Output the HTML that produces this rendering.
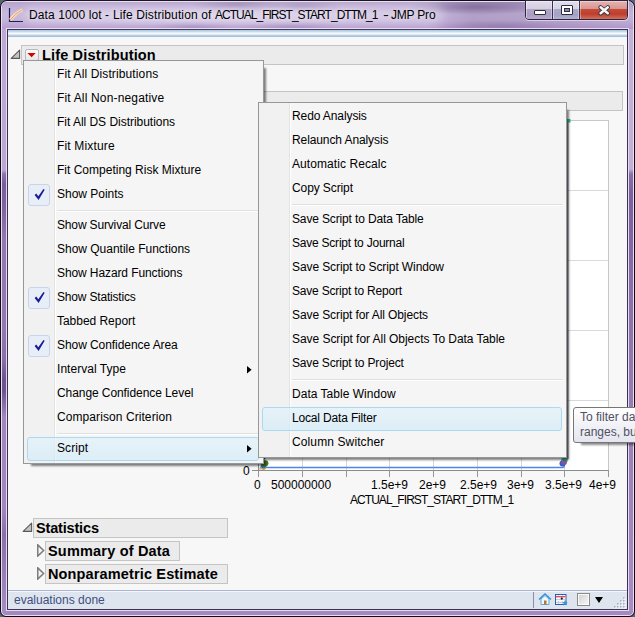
<!DOCTYPE html>
<html><head><meta charset="utf-8">
<style>
*{margin:0;padding:0;box-sizing:border-box}
html,body{width:635px;height:617px;overflow:hidden;background:#56666c}
body{position:relative;font-family:"Liberation Sans",sans-serif;font-size:12px;color:#000}
.abs{position:absolute}
#frame{position:absolute;left:0;top:0;width:635px;height:617px;border-radius:7px 7px 6px 6px;
 background:#a38abe;border:1px solid #120a1a;overflow:hidden}
#frame:before{content:"";position:absolute;left:0;top:0;right:0;bottom:0;border:1px solid rgba(240,232,248,.9);border-radius:6px 6px 5px 5px}
#tbar{position:absolute;left:1px;top:1px;width:631px;height:28px;border-radius:6px 6px 0 0;
 background:
  radial-gradient(ellipse 220px 10px at 220px 14px, rgba(230,222,240,.6), rgba(230,222,240,0)),
  radial-gradient(ellipse 45px 7px at 235px 3px, rgba(110,90,135,.4), rgba(110,90,135,0)),
  radial-gradient(ellipse 40px 6px at 300px 4px, rgba(110,90,135,.3), rgba(110,90,135,0)),
  radial-gradient(ellipse 70px 8px at 475px 5px, rgba(100,82,125,.55), rgba(100,82,125,0)),
  radial-gradient(ellipse 40px 6px at 190px 25px, rgba(120,95,150,.3), rgba(120,95,150,0)),
  radial-gradient(ellipse 50px 6px at 290px 25px, rgba(120,95,150,.3), rgba(120,95,150,0)),
  radial-gradient(ellipse 60px 6px at 500px 24px, rgba(110,85,140,.3), rgba(110,85,140,0)),
  linear-gradient(90deg,rgba(80,55,110,0) 0px,rgba(80,55,110,0) 425px,rgba(80,55,110,.18) 470px,rgba(80,55,110,.14) 560px,rgba(80,55,110,.04) 633px),
  linear-gradient(#b6a4cc 0px,#c0aed6 5px,#c8b8dc 11px,#c6b5da 18px,#bba4d3 24px,#b49acd 28px)}
#client{position:absolute;left:7px;top:29px;width:621px;height:581px;border:1px solid #3e3050;background:#f7f7f7;box-shadow:0 0 0 1px rgba(236,228,246,.9)}
#cband{position:absolute;left:8px;top:30px;width:619px;height:7px;background:linear-gradient(#abc8df 0px,#c4d9ea 1.5px,#eef4fa 3px,#f6f9fd 3.5px,#dbe7f2 4.5px,#a9c2dc 6px,#a9c2dc 7px)}
.title{position:absolute;left:29px;top:8px;font-size:12px;line-height:14px;color:#000;letter-spacing:-0.28px;white-space:nowrap;text-shadow:0 0 5px rgba(255,255,255,.55)}
.hbox{position:absolute;background:#ebebeb;border:1px solid #c4c4c4}
.htxt{position:absolute;font-weight:bold;font-size:14.5px;line-height:17px;white-space:nowrap}
.menu{position:absolute;background:#f5f5f5;border:1px solid #979797;box-shadow:5px 5px 2px -3px rgba(0,0,0,.5)}
.gut{position:absolute;left:0;top:0;bottom:0;width:31px;background:#f1f1f1;border-right:1px solid #e2e3e3}
.gut:after{content:"";position:absolute;right:-2px;top:0;bottom:0;width:1px;background:#fff}
.mi{position:absolute;white-space:nowrap;font-size:12px;line-height:14px;letter-spacing:-0.1px}
.sep{position:absolute;height:2px;border-top:1px solid #e0e0e0;border-bottom:1px solid #fff}
.hl{position:absolute;border:1px solid #aad9f2;border-radius:3px;background:linear-gradient(rgba(226,242,250,.75),rgba(214,236,247,.75))}
.chk{position:absolute;width:22px;height:22px;border:1px solid #cad3ec;border-radius:3px;background:#e8eef8}
.arr{position:absolute;width:0;height:0;border-left:4px solid #000;border-top:3.5px solid transparent;border-bottom:3.5px solid transparent}
.ax{position:absolute;font-size:12px;white-space:nowrap;line-height:14px}
.cbtn{position:absolute;top:0;height:18px}
</style></head><body>
<div id="frame"><div id="tbar"></div>
<div class="abs" style="left:1px;top:28px;width:5px;height:583px;background:linear-gradient(#bcaad4 0px,#baa8d3 141px,#8e74ae 145px,#7a5e9c 155px,#7e64a0 178px,#9278b0 210px,#9278b0 300px,#8a70aa 330px,#6c5490 350px,#6c5490 362px,#a088bc 388px,#a088bc 480px,#8a70a8 505px,#a58cc2 583px)"></div>
<div class="abs" style="left:628px;top:28px;width:4px;height:583px;background:linear-gradient(#c2b2d8 0px,#c0b0d7 140px,#8a70a8 145px,#7a60a0 165px,#8e76ac 300px,#9a82b8 420px,#a68dc3 583px)"></div>
</div>
<div id="client"></div>
<div id="cband"></div>

<!-- title icon -->
<svg class="abs" style="left:8px;top:7px" width="16" height="16" viewBox="0 0 16 16">
 <path d="M1.5 1 V14.5 H15" stroke="#1b2350" stroke-width="1.2" fill="none"/>
 <path d="M2.2 13 Q7 6.5 14.5 2.6" stroke="#fbe1ad" stroke-width="3" fill="none"/>
 <path d="M2.2 13 Q7 6.5 14.5 2.6" stroke="#e7948e" stroke-width="1" fill="none"/>
</svg>
<div class="abs" style="left:24px;top:5px;width:420px;height:20px;border-radius:10px;background:rgba(236,228,244,.35);filter:blur(4px)"></div>
<div class="title" style="left:29px;letter-spacing:0.1px">Data 1000 lot -</div>
<div class="title" style="left:113px;letter-spacing:0.12px">Life Distribution of</div>
<div class="title" style="left:215px;letter-spacing:-0.98px">ACTUAL_FIRST_START_DTTM_1</div>
<div class="title" style="left:383px;letter-spacing:0;transform:scaleX(1.5);transform-origin:0 0">-</div>
<div class="title" style="left:391px;letter-spacing:-0.2px">JMP Pro</div>

<!-- caption buttons -->
<div class="abs" style="left:525px;top:0;width:103px;height:20px;border:1px solid #2e2640;border-radius:0 0 4px 4px;overflow:hidden;box-shadow:0 1px 0 rgba(240,235,250,.6),1px 0 0 rgba(240,235,250,.7)">
 <div class="cbtn" style="left:0;width:27px;background:linear-gradient(#e2dcea 0px,#d6cde2 8px,#b2a6c8 8.5px,#a99dc2 14px,#b8acd0 18px);border-right:1px solid #3a3050;box-shadow:inset 1px 1px 0 rgba(255,255,255,.45),inset -1px 0 0 rgba(255,255,255,.35)"></div>
 <div class="cbtn" style="left:27px;width:27px;background:linear-gradient(#e0dfec 0px,#d4d2e4 8px,#aaa8c8 8.5px,#a3a2c4 14px,#b4b2d2 18px);border-right:1px solid #3a3050;box-shadow:inset 1px 1px 0 rgba(255,255,255,.45),inset -1px 0 0 rgba(255,255,255,.35)"></div>
 <div class="cbtn" style="left:54px;width:48px;background:linear-gradient(#e6b4b0 0px,#d99590 8px,#c44a38 8.5px,#be3e2c 13px,#d2705e 18px);box-shadow:inset 1px 1px 0 rgba(255,255,255,.35)"></div>
 <div class="abs" style="left:8px;top:9px;width:12px;height:5px;background:#fff;border:1px solid #2c2c3c;border-radius:1px"></div>
 <div class="abs" style="left:35px;top:4px;width:12px;height:10px;border:1px solid #2c2c3c;background:#fff;border-radius:1px"></div>
 <div class="abs" style="left:38px;top:7px;width:6px;height:4px;border:1px solid #2c2c3c;background:#8e88b8"></div>
 <svg class="abs" style="left:72px;top:4px" width="13" height="12" viewBox="0 0 13 12">
  <path d="M2.6 2.3 L9.8 8.3 M9.8 2.3 L2.6 8.3" stroke="#3a3440" stroke-width="4.3" stroke-linecap="round"/>
  <path d="M2.6 2.3 L9.8 8.3 M9.8 2.3 L2.6 8.3" stroke="#f6f6f6" stroke-width="2.5" stroke-linecap="round"/>
 </svg>
</div>

<!-- Life Distribution header -->
<div class="hbox" style="left:21px;top:45px;width:603px;height:20px"></div>
<svg class="abs" style="left:10px;top:49px" width="11" height="11"><path d="M9.6 1.2 V9.4 H1.2 Z" fill="#c4c4c4" stroke="#5a5a5a" stroke-width="1.1" stroke-linejoin="round"/></svg>
<div class="abs" style="left:25px;top:49px;width:14px;height:12px;border:1px solid #b9b9b9;border-radius:2px;background:linear-gradient(#fdfdfd,#e6e6e6)"></div>
<svg class="abs" style="left:27px;top:52px" width="10" height="7"><path d="M0.4 1 H8.7 L4.6 5.3Z" fill="#d80000"/></svg>
<div class="htxt" style="left:42px;top:47px;letter-spacing:0.16px">Life Distribution</div>

<!-- second bar -->
<div class="hbox" style="left:40px;top:91px;width:583px;height:20px"></div>

<!-- plot -->
<div class="abs" style="left:258px;top:120px;width:351px;height:351px;background:#fff;border:1px solid #c8c8c8;border-left-color:#8c8c8c;border-bottom-color:#8c8c8c"></div>
<div class="abs" style="left:302px;top:121px;width:1px;height:349px;background:#d9d9d9"></div>
<div class="abs" style="left:346px;top:121px;width:1px;height:349px;background:#d9d9d9"></div>
<div class="abs" style="left:389px;top:121px;width:1px;height:349px;background:#d9d9d9"></div>
<div class="abs" style="left:433px;top:121px;width:1px;height:349px;background:#d9d9d9"></div>
<div class="abs" style="left:477px;top:121px;width:1px;height:349px;background:#d9d9d9"></div>
<div class="abs" style="left:521px;top:121px;width:1px;height:349px;background:#d9d9d9"></div>
<div class="abs" style="left:564px;top:121px;width:1px;height:349px;background:#d9d9d9"></div>
<div class="abs" style="left:259px;top:190px;width:349px;height:1px;background:#d9d9d9"></div>
<div class="abs" style="left:259px;top:260px;width:349px;height:1px;background:#d9d9d9"></div>
<div class="abs" style="left:259px;top:330px;width:349px;height:1px;background:#d9d9d9"></div>
<div class="abs" style="left:259px;top:400px;width:349px;height:1px;background:#d9d9d9"></div>
<div class="abs" style="left:258px;top:470px;width:1px;height:7px;background:#959595"></div>
<div class="abs" style="left:302px;top:470px;width:1px;height:7px;background:#959595"></div>
<div class="abs" style="left:346px;top:470px;width:1px;height:7px;background:#959595"></div>
<div class="abs" style="left:389px;top:470px;width:1px;height:7px;background:#959595"></div>
<div class="abs" style="left:433px;top:470px;width:1px;height:7px;background:#959595"></div>
<div class="abs" style="left:477px;top:470px;width:1px;height:7px;background:#959595"></div>
<div class="abs" style="left:521px;top:470px;width:1px;height:7px;background:#959595"></div>
<div class="abs" style="left:564px;top:470px;width:1px;height:7px;background:#959595"></div>
<div class="abs" style="left:608px;top:470px;width:1px;height:7px;background:#959595"></div>
<div class="abs" style="left:252px;top:120px;width:7px;height:1px;background:#8c8c8c"></div>
<div class="abs" style="left:252px;top:190px;width:7px;height:1px;background:#8c8c8c"></div>
<div class="abs" style="left:252px;top:260px;width:7px;height:1px;background:#8c8c8c"></div>
<div class="abs" style="left:252px;top:330px;width:7px;height:1px;background:#8c8c8c"></div>
<div class="abs" style="left:252px;top:400px;width:7px;height:1px;background:#8c8c8c"></div>
<div class="abs" style="left:252px;top:470px;width:7px;height:1px;background:#8c8c8c"></div>
<svg class="abs" style="left:255px;top:115px" width="320" height="360">
 <defs><pattern id="pp" width="3" height="7" patternUnits="userSpaceOnUse">
  <rect width="3" height="7" fill="#6a6478"/><rect y="0" width="3" height="2" fill="#6e7650"/><rect y="2" width="3" height="2" fill="#80648e"/><rect y="5" width="3" height="2" fill="#5a6898"/>
 </pattern></defs>
 <rect x="310.5" y="4" width="3" height="340" fill="url(#pp)" opacity=".75"/>
 <rect x="311.5" y="4" width="4" height="3.5" fill="#22c085"/>
 <path d="M5 352.5 H307.5 Q309.5 352.5 309.5 350 V5" stroke="#5084ec" stroke-width="1.3" fill="none"/>
 <circle cx="5.2" cy="353.8" r="1.3" fill="#e0a0c8" opacity=".8"/>
 <circle cx="8.5" cy="352.3" r="2.6" fill="#b8a848"/>
 <circle cx="8.5" cy="350.5" r="2.8" fill="#3c7090"/>
 <circle cx="10.3" cy="348.3" r="3.1" fill="#4a7a1e"/>
 <circle cx="9.5" cy="343.5" r="1" fill="#3050b0"/>
 <circle cx="307.5" cy="348.5" r="3" fill="#3060c0"/>
 <circle cx="309" cy="347" r="3" fill="#9040c0"/>
 <circle cx="309.5" cy="345.5" r="3" fill="#5a8a30"/>
 <circle cx="309.5" cy="344" r="3" fill="#30b0a0"/>
 <circle cx="309.5" cy="346.5" r="2" fill="#7a5aa0"/>
</svg>
<div class="ax" style="left:243px;top:464px">0</div>
<div class="ax" style="left:254px;top:478px">0</div>
<div class="ax" style="left:271px;top:478px">500000000</div>
<div class="ax" style="left:371px;top:478px">1.5e+9</div>
<div class="ax" style="left:419px;top:478px">2e+9</div>
<div class="ax" style="left:460px;top:478px">2.5e+9</div>
<div class="ax" style="left:507px;top:478px">3e+9</div>
<div class="ax" style="left:545px;top:478px">3.5e+9</div>
<div class="ax" style="left:589px;top:478px">4e+9</div>
<div class="ax" style="left:350px;top:493px;letter-spacing:-0.95px">ACTUAL_FIRST_START_DTTM_1</div>

<!-- statistics -->
<div class="hbox" style="left:33px;top:518px;width:195px;height:20px"></div>
<svg class="abs" style="left:22px;top:522px" width="11" height="11"><path d="M9.6 1.2 V9.4 H1.2 Z" fill="#c4c4c4" stroke="#5a5a5a" stroke-width="1.1" stroke-linejoin="round"/></svg>
<div class="htxt" style="left:36px;top:520px;letter-spacing:-0.17px">Statistics</div>
<div class="hbox" style="left:45px;top:541px;width:135px;height:20px"></div>
<svg class="abs" style="left:37px;top:544px" width="8" height="13"><path d="M0.75 0.9 L6.6 6.5 L0.75 12.1 Z" fill="#f4f4f4" stroke="#7c7c7c" stroke-width="1.5"/></svg>
<div class="htxt" style="left:48px;top:543px;letter-spacing:0.19px">Summary of Data</div>
<div class="hbox" style="left:45px;top:564px;width:183px;height:20px"></div>
<svg class="abs" style="left:37px;top:567px" width="8" height="13"><path d="M0.75 0.9 L6.6 6.5 L0.75 12.1 Z" fill="#f4f4f4" stroke="#7c7c7c" stroke-width="1.5"/></svg>
<div class="htxt" style="left:48px;top:566px;letter-spacing:0.14px">Nonparametric Estimate</div>

<!-- status bar -->
<div class="abs" style="left:8px;top:590px;width:619px;height:19px;background:#dfe5ef;border-top:1px solid #a9b3d3;box-shadow:inset 0 1px 0 #f4f6fa"></div>
<div class="abs" style="left:14px;top:593px;color:#3f4d80;font-size:12px;line-height:14px">evaluations done</div>
<div class="abs" style="left:533px;top:592px;width:1px;height:16px;background:#8a90a8"></div>
<svg class="abs" style="left:538px;top:593px" width="14" height="12" viewBox="0 0 14 12">
 <path d="M1 6.5 L7 1 L13 6.5" stroke="#3a90d8" stroke-width="1.5" fill="none"/>
 <path d="M3 6 V11.5 H11 V6 L7 2.5Z" fill="#eef7fd" stroke="#5aa8e0" stroke-width="1"/>
 <rect x="6" y="7.5" width="2.5" height="4" fill="#b47a2a"/>
</svg>
<svg class="abs" style="left:555px;top:594px" width="13" height="12" viewBox="0 0 13 12">
 <rect x="0.5" y="0.5" width="10.5" height="10" fill="#f4f8fc" stroke="#2f5fae"/>
 <path d="M1 2.5 H10.5" stroke="#e4504e" stroke-width="1"/><path d="M1 3.5 H10.5" stroke="#f2b8b8" stroke-width="1"/>
 <path d="M1 5.5 H10.5 M1 8.5 H10.5" stroke="#b9cbe6" stroke-width="1"/>
 <path d="M3.5 1 V10 M7.5 1 V10" stroke="#c8d4e8" stroke-width="1" stroke-dasharray="1 1"/>
 <circle cx="6.8" cy="4.6" r="1.1" fill="#111"/>
 <path d="M10 6 L10.8 8 L12.8 8.3 L11.3 9.6 L11.8 11.6 L10 10.5 L8.2 11.6 L8.7 9.6 L7.2 8.3 L9.2 8 Z" fill="#3a8ee0"/>
</svg>
<div class="abs" style="left:577px;top:593px;width:13px;height:13px;border:1px solid #8a8a8a;background:linear-gradient(135deg,#d0d0d0,#f8f8f8);box-shadow:inset 0 0 0 1px #fafafa"></div>
<svg class="abs" style="left:595px;top:597px" width="8" height="6"><path d="M0 0 H8 L4 6Z" fill="#000"/></svg>
<svg class="abs" style="left:613px;top:596px" width="14" height="13"><rect x="11" y="2" width="1.5" height="1.5" fill="#fff"/><rect x="8" y="5" width="1.5" height="1.5" fill="#fff"/><rect x="11" y="5" width="1.5" height="1.5" fill="#fff"/><rect x="5" y="8" width="1.5" height="1.5" fill="#fff"/><rect x="8" y="8" width="1.5" height="1.5" fill="#fff"/><rect x="11" y="8" width="1.5" height="1.5" fill="#fff"/><rect x="2" y="11" width="1.5" height="1.5" fill="#fff"/><rect x="5" y="11" width="1.5" height="1.5" fill="#fff"/><rect x="8" y="11" width="1.5" height="1.5" fill="#fff"/><rect x="11" y="11" width="1.5" height="1.5" fill="#fff"/><rect x="10" y="1" width="1.6" height="1.6" fill="#a8b2c4"/><rect x="7" y="4" width="1.6" height="1.6" fill="#a8b2c4"/><rect x="10" y="4" width="1.6" height="1.6" fill="#a8b2c4"/><rect x="4" y="7" width="1.6" height="1.6" fill="#a8b2c4"/><rect x="7" y="7" width="1.6" height="1.6" fill="#a8b2c4"/><rect x="10" y="7" width="1.6" height="1.6" fill="#a8b2c4"/><rect x="1" y="10" width="1.6" height="1.6" fill="#a8b2c4"/><rect x="4" y="10" width="1.6" height="1.6" fill="#a8b2c4"/><rect x="7" y="10" width="1.6" height="1.6" fill="#a8b2c4"/><rect x="10" y="10" width="1.6" height="1.6" fill="#a8b2c4"/></svg>

<!-- tooltip -->
<div class="abs" style="left:573px;top:407px;width:90px;height:36px;border:1px solid #767676;border-radius:3px;background:linear-gradient(#ffffff,#e4e5f0);box-shadow:5px 5px 2px -3px rgba(0,0,0,.45);overflow:hidden">
 <div class="abs" style="left:6px;top:1.5px;color:#505060;font-size:12px;line-height:15px;white-space:nowrap">To filter data<br>ranges, but</div>
</div>

<!--MENUS-->
<div class="menu" style="left:23px;top:60px;width:241px;height:404px">
<div class="gut"></div>
<div class="mi" style="left:33px;top:6px;letter-spacing:0.125px">Fit All Distributions</div>
<div class="mi" style="left:33px;top:30px;letter-spacing:0.163px">Fit All Non-negative</div>
<div class="mi" style="left:33px;top:54px;letter-spacing:-0.026px">Fit All DS Distributions</div>
<div class="mi" style="left:33px;top:78px;letter-spacing:0.170px">Fit Mixture</div>
<div class="mi" style="left:33px;top:102px;letter-spacing:0.004px">Fit Competing Risk Mixture</div>
<div class="chk" style="left:4px;top:123px"></div>
<svg class="abs" style="left:10px;top:128px" width="12" height="12" viewBox="0 0 12 12"><path d="M0.6 5.9 L2.3 4.6 L4.3 7.3 L9.4 0.1 L10.7 0.8 L4.6 10.9 Z" fill="#1c1c96"/></svg>
<div class="mi" style="left:33px;top:126px;letter-spacing:-0.020px">Show Points</div>
<div class="sep" style="left:33px;top:149px;width:203px"></div>
<div class="mi" style="left:33px;top:157px;letter-spacing:-0.156px">Show Survival Curve</div>
<div class="mi" style="left:33px;top:181px;letter-spacing:-0.014px">Show Quantile Functions</div>
<div class="mi" style="left:33px;top:205px;letter-spacing:-0.100px">Show Hazard Functions</div>
<div class="chk" style="left:4px;top:226px"></div>
<svg class="abs" style="left:10px;top:231px" width="12" height="12" viewBox="0 0 12 12"><path d="M0.6 5.9 L2.3 4.6 L4.3 7.3 L9.4 0.1 L10.7 0.8 L4.6 10.9 Z" fill="#1c1c96"/></svg>
<div class="mi" style="left:33px;top:229px;letter-spacing:-0.186px">Show Statistics</div>
<div class="mi" style="left:33px;top:253px;letter-spacing:-0.033px">Tabbed Report</div>
<div class="chk" style="left:4px;top:274px"></div>
<svg class="abs" style="left:10px;top:279px" width="12" height="12" viewBox="0 0 12 12"><path d="M0.6 5.9 L2.3 4.6 L4.3 7.3 L9.4 0.1 L10.7 0.8 L4.6 10.9 Z" fill="#1c1c96"/></svg>
<div class="mi" style="left:33px;top:277px;letter-spacing:-0.068px">Show Confidence Area</div>
<div class="mi" style="left:33px;top:301px;letter-spacing:0.042px">Interval Type</div>
<svg class="abs" style="left:223px;top:305px" width="6" height="9"><path d="M0 0 L4.6 3.8 L0 7.6Z" fill="#000"/></svg>
<div class="mi" style="left:33px;top:325px;letter-spacing:-0.077px">Change Confidence Level</div>
<div class="mi" style="left:33px;top:349px;letter-spacing:0.079px">Comparison Criterion</div>
<div class="sep" style="left:33px;top:372px;width:203px"></div>
<div class="hl" style="left:3px;top:376px;width:232px;height:24px"></div>
<div class="mi" style="left:33px;top:380px;letter-spacing:0.100px">Script</div>
<svg class="abs" style="left:223px;top:384px" width="6" height="9"><path d="M0 0 L4.6 3.8 L0 7.6Z" fill="#000"/></svg>
</div>
<div class="menu" style="left:258px;top:102px;width:309px;height:356px">
<div class="gut"></div>
<div class="mi" style="left:33px;top:6px;letter-spacing:-0.100px">Redo Analysis</div>
<div class="mi" style="left:33px;top:30px;letter-spacing:-0.100px">Relaunch Analysis</div>
<div class="mi" style="left:33px;top:54px;letter-spacing:0.080px">Automatic Recalc</div>
<div class="mi" style="left:33px;top:78px;letter-spacing:-0.100px">Copy Script</div>
<div class="sep" style="left:33px;top:101px;width:271px"></div>
<div class="mi" style="left:33px;top:109px;letter-spacing:-0.142px">Save Script to Data Table</div>
<div class="mi" style="left:33px;top:133px;letter-spacing:-0.224px">Save Script to Journal</div>
<div class="mi" style="left:33px;top:157px;letter-spacing:-0.100px">Save Script to Script Window</div>
<div class="mi" style="left:33px;top:181px;letter-spacing:-0.200px">Save Script to Report</div>
<div class="mi" style="left:33px;top:205px;letter-spacing:-0.100px">Save Script for All Objects</div>
<div class="mi" style="left:33px;top:229px;letter-spacing:-0.050px">Save Script for All Objects To Data Table</div>
<div class="mi" style="left:33px;top:253px;letter-spacing:-0.167px">Save Script to Project</div>
<div class="sep" style="left:33px;top:276px;width:271px"></div>
<div class="mi" style="left:33px;top:284px;letter-spacing:0.025px">Data Table Window</div>
<div class="hl" style="left:3px;top:304px;width:300px;height:24px"></div>
<div class="mi" style="left:33px;top:308px;letter-spacing:-0.163px">Local Data Filter</div>
<div class="mi" style="left:33px;top:332px;letter-spacing:0.114px">Column Switcher</div>
</div>
<!--/MENUS-->
</body></html>
